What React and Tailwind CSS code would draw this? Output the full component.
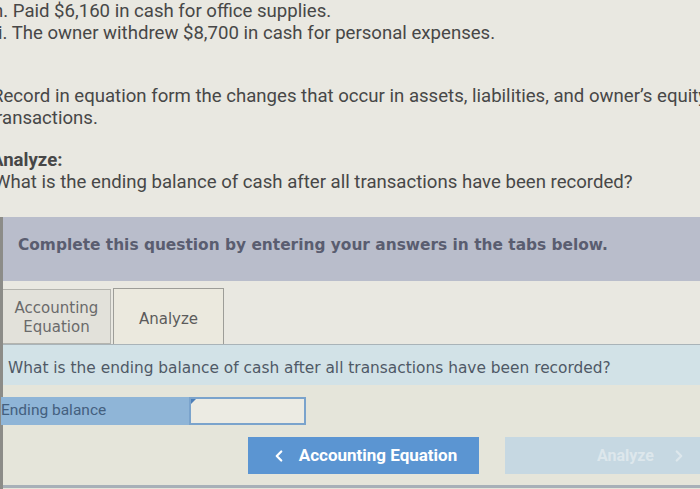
import { ChevronLeft, ChevronRight } from "lucide-react";

const top = "font-['Roboto','Liberation_Sans',sans-serif] text-[18.6px] leading-[22px] text-[#474747] whitespace-nowrap";
const verdana = "font-['DejaVu_Sans','Verdana',sans-serif]";

export default function App() {
  return (
    <div className="w-[700px] h-[489px] overflow-hidden bg-[#e9e8e1] flex flex-col">
      {/* problem text */}
      <div className={top}>
        <div className="ml-[-7px]">h. Paid $6,160 in cash for office supplies.</div>
        <div className="ml-[-2px]">i. The owner withdrew $8,700 in cash for personal expenses.</div>
        <div className="h-[41px]" />
        <div className="ml-[-8px]">Record in equation form the changes that occur in assets, liabilities, and owner’s equity for each of the</div>
        <div className="ml-[-10px]">transactions.</div>
        <div className="h-[20px]" />
        <div className="ml-[-9px] font-bold">Analyze:</div>
        <div className="ml-[-6px]">What is the ending balance of cash after all transactions have been recorded?</div>
      </div>

      <div className="mt-[24px] flex-1 flex flex-col border-l-[3px] border-[#8c8c88]">
        {/* instruction banner */}
        <div className={`${verdana} h-[64px] bg-[#b9bdcb] flex items-center pl-[15px] pb-[6px] text-[15.4px] font-bold text-[#5a5d70]`}>
          Complete this question by entering your answers in the tabs below.
        </div>

        {/* tabs */}
        <div className={`${verdana} mt-[8px] flex items-end h-[56px] border-b border-[#a9b3b8]`}>
          <div className="w-[108px] h-[55px] bg-[#e2e1da] border border-l-0 border-[#b4b4ae] flex flex-col items-center justify-center pt-[3px] text-[15px] leading-[19px] text-[#6a6a6a]">
            <span>Accounting</span>
            <span>Equation</span>
          </div>
          <div className="ml-[2px] w-[111px] h-[56px] bg-[#ebe9de] border border-b-0 border-[#9d9d98] flex items-center justify-center pt-[6px] text-[15px] text-[#5b5b5b]">
            Analyze
          </div>
        </div>

        {/* panel */}
        <div className="flex-1 flex flex-col bg-[#e5e5da]">
          <div className={`${verdana} h-[40px] bg-[#d2e2e7] flex items-center pl-[5px] pt-[8px] text-[15.4px] text-[#4f5966]`}>
            What is the ending balance of cash after all transactions have been recorded?
          </div>
          <div className="mt-[12px] flex h-[28px]">
            <div className="w-[188px] bg-[#8fb5d7] flex items-center font-['Roboto',sans-serif] text-[15.5px] text-[#44607f] ml-[-2px]">
              Ending balance
            </div>
            <div className="relative w-[117px] bg-[#ecebe3] border-2 border-[#7aa3cc]">
              <div className="absolute left-0 top-0 w-0 h-0 border-t-[5px] border-r-[5px] border-t-[#4d7fb8] border-r-transparent" />
            </div>
          </div>
          <div className="mt-[12px] flex h-[37px]">
            <div className="ml-[245px] w-[231px] bg-[#5b95d2] flex items-center justify-center gap-[11px] font-['Roboto',sans-serif] font-bold text-[17px] text-white">
              <ChevronLeft size={18} strokeWidth={3} />
              <span>Accounting Equation</span>
            </div>
            <div className="ml-[26px] flex-1 bg-[#c6d8e2] flex items-center justify-end pr-[12px] gap-[16px] font-['Roboto',sans-serif] font-bold text-[16px] text-[#dde7ec]">
              <span>Analyze</span>
              <ChevronRight size={18} strokeWidth={3} />
            </div>
          </div>
          <div className="mt-[11px] h-[3px] bg-[#a7b0b8]" />
        </div>
      </div>
    </div>
  );
}
